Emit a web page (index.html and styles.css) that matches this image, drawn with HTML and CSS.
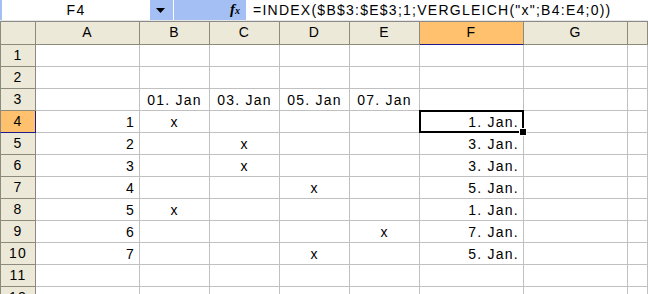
FILE: index.html
```html
<!DOCTYPE html>
<html lang="de">
<head>
  <meta charset="UTF-8">
  <title>Mappe1 - INDEX / VERGLEICH</title>
  <link rel="stylesheet" href="styles.css">
</head>
<body>
  <!-- Bearbeitungsleiste -->
  <div class="formula-bar">
    <div class="name-box">F4</div>
    <div class="name-drop">
      <svg width="9" height="5" viewBox="0 0 9 5"><polygon points="0,0 9,0 4.5,5" fill="#000"/></svg>
    </div>
    <div class="fx-box"><span class="fx">f<span class="fx-x">x</span></span></div>
    <div class="formula">=INDEX($B$3:$E$3;1;VERGLEICH("x";B4:E4;0))</div>
  </div>

  <!-- Tabelle -->
  <div class="sheet">
    <div class="hd corner"></div>
    <div class="hd col">A</div>
    <div class="hd col">B</div>
    <div class="hd col">C</div>
    <div class="hd col">D</div>
    <div class="hd col">E</div>
    <div class="hd col sel">F</div>
    <div class="hd col">G</div>
    <div class="hd col"></div>

    <div class="hd row">1</div>
    <div class="c"></div><div class="c"></div><div class="c"></div><div class="c"></div><div class="c"></div><div class="c"></div><div class="c"></div><div class="c"></div>

    <div class="hd row">2</div>
    <div class="c"></div><div class="c"></div><div class="c"></div><div class="c"></div><div class="c"></div><div class="c"></div><div class="c"></div><div class="c"></div>

    <div class="hd row">3</div>
    <div class="c"></div><div class="c mid">01. Jan</div><div class="c mid">03. Jan</div><div class="c mid">05. Jan</div><div class="c mid">07. Jan</div><div class="c"></div><div class="c"></div><div class="c"></div>

    <div class="hd row sel">4</div>
    <div class="c num">1</div><div class="c mid">x</div><div class="c"></div><div class="c"></div><div class="c"></div><div class="c num active">1. Jan.</div><div class="c"></div><div class="c"></div>

    <div class="hd row">5</div>
    <div class="c num">2</div><div class="c"></div><div class="c mid">x</div><div class="c"></div><div class="c"></div><div class="c num">3. Jan.</div><div class="c"></div><div class="c"></div>

    <div class="hd row">6</div>
    <div class="c num">3</div><div class="c"></div><div class="c mid">x</div><div class="c"></div><div class="c"></div><div class="c num">3. Jan.</div><div class="c"></div><div class="c"></div>

    <div class="hd row">7</div>
    <div class="c num">4</div><div class="c"></div><div class="c"></div><div class="c mid">x</div><div class="c"></div><div class="c num">5. Jan.</div><div class="c"></div><div class="c"></div>

    <div class="hd row">8</div>
    <div class="c num">5</div><div class="c mid">x</div><div class="c"></div><div class="c"></div><div class="c"></div><div class="c num">1. Jan.</div><div class="c"></div><div class="c"></div>

    <div class="hd row">9</div>
    <div class="c num">6</div><div class="c"></div><div class="c"></div><div class="c"></div><div class="c mid">x</div><div class="c num">7. Jan.</div><div class="c"></div><div class="c"></div>

    <div class="hd row">10</div>
    <div class="c num">7</div><div class="c"></div><div class="c"></div><div class="c mid">x</div><div class="c"></div><div class="c num">5. Jan.</div><div class="c"></div><div class="c"></div>

    <div class="hd row">11</div>
    <div class="c"></div><div class="c"></div><div class="c"></div><div class="c"></div><div class="c"></div><div class="c"></div><div class="c"></div><div class="c"></div>

    <div class="hd row">12</div>
    <div class="c"></div><div class="c"></div><div class="c"></div><div class="c"></div><div class="c"></div><div class="c"></div><div class="c"></div><div class="c"></div>
  </div>
</body>
</html>
```

FILE: styles.css
```css
/* Grundlagen */
* { margin: 0; padding: 0; box-sizing: border-box; }
html, body { width: 100%; height: 100%; overflow: hidden; background: #fff; }
body {
  font-family: "Liberation Sans", Arial, sans-serif;
  font-size: 14px;
  letter-spacing: 1.25px;
  color: #000;
}

/* Bearbeitungsleiste: 20px Leiste, darunter heller und grauer Strich */
.formula-bar {
  display: flex;
  align-items: flex-start;
  height: 22px;
  background: #e6e6e6;
  border-bottom: 1px solid #8a8a8a;
}
.name-box {
  width: 150px;
  height: 20px;
  background: #fff;
  border-left: 2px solid #a3bff3;
  text-align: center;
  line-height: 20px;
}
.name-drop {
  width: 24px;
  height: 20px;
  background: #a3bff3;
  border-right: 1px solid #fff;
  display: flex;
  align-items: center;
  justify-content: center;
  padding-right: 2px;
}
.fx-box {
  width: 72px;
  height: 20px;
  background: #a3bff3;
  display: flex;
  align-items: center;
  justify-content: flex-end;
  padding-right: 6px;
}
.fx {
  font-family: "Liberation Serif", serif;
  font-style: italic;
  font-weight: bold;
  font-size: 15px;
  letter-spacing: 0;
  line-height: 20px;
}
.fx-x { font-size: 10px; }
.formula {
  flex: 1;
  height: 20px;
  background: #fff;
  line-height: 20px;
  padding-left: 7px;
  white-space: nowrap;
}

/* Tabellenraster */
.sheet {
  display: grid;
  grid-template-columns: 36px 104px 70px 70px 70px 70px 104px 104px 1fr;
  grid-template-rows: 23px;
  grid-auto-rows: 22px;
}
.hd {
  background: #ece9d8;
  border-right: 1px solid #8c8a7b;
  border-bottom: 1px solid #8c8a7b;
  text-align: center;
  line-height: 21px;
}
.hd.row,
.hd.corner { border-left: 1px solid #8c8a7b; }
.hd.col.sel {
  background: #ffc16e;
  border-bottom-color: #1c1c8c;
}
.hd.row.sel {
  background: #ffc16e;
  border-bottom-color: #1c1c8c;
  border-right-color: #1c1c8c;
}

.c {
  border-right: 1px solid #c0c0c0;
  border-bottom: 1px solid #c0c0c0;
  line-height: 21px;
  padding-top: 1px;
  white-space: nowrap;
}
.c.num { text-align: right; padding-right: 4px; }
.c.mid { text-align: center; }

/* Aktive Zelle mit Ausfüllkästchen */
.c.active { position: relative; }
.c.active::after {
  content: "";
  position: absolute;
  top: -1px; left: -1px; right: -1px; bottom: -1px;
  border: 2px solid #000;
}
.c.active::before {
  content: "";
  position: absolute;
  right: -4px;
  bottom: -4px;
  width: 6px;
  height: 6px;
  background: #000;
  border: 1px solid #fff;
  z-index: 2;
}
```
